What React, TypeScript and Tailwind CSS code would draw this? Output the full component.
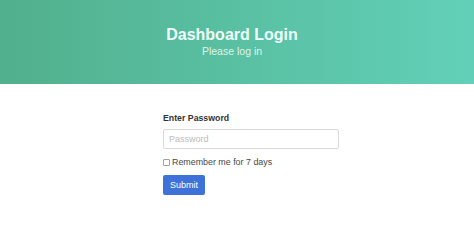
import React from 'react';

export default function App() {
  return (
    <div className="w-[474px] h-[233px] bg-white font-['Liberation_Sans',Arial,sans-serif]">
      <header className="h-[84px] bg-gradient-to-r from-[#51b08d] to-[#62d0b8] flex flex-col items-center pt-[25px] pr-[10px]">
        <h1 className="text-[16px] leading-[20px] font-bold text-[#effffa]">Dashboard Login</h1>
        <p className="text-[10.5px] leading-[13px] text-[#dcf5ec]">Please log in</p>
      </header>

      {/* login form */}
      <form className="w-[176px] ml-[163px] pt-[29px] flex flex-col" onSubmit={(e) => e.preventDefault()}>
        <label className="text-[8.75px] leading-[11px] font-bold text-[#333]">Enter Password</label>
        <input
          type="password"
          placeholder="Password"
          className="mt-[5px] h-[20px] w-[176px] border border-[#d9d9d9] rounded-[2px] px-[5px] text-[9px] placeholder:text-[#bcbcbc] outline-none"
        />
        <label className="mt-[8px] flex items-center gap-[2px] text-[8.9px] leading-[11px] text-[#484848]">
          <span className="w-[7px] h-[7px] border border-[#a0a0a0] rounded-[1px] bg-white" />
          Remember me for 7 days
        </label>
        <button
          type="submit"
          className="mt-[7px] w-[42px] h-[20px] bg-[#3e72d8] rounded-[2px] text-white text-[9px] leading-[20px] text-center"
        >
          Submit
        </button>
      </form>
    </div>
  );
}
